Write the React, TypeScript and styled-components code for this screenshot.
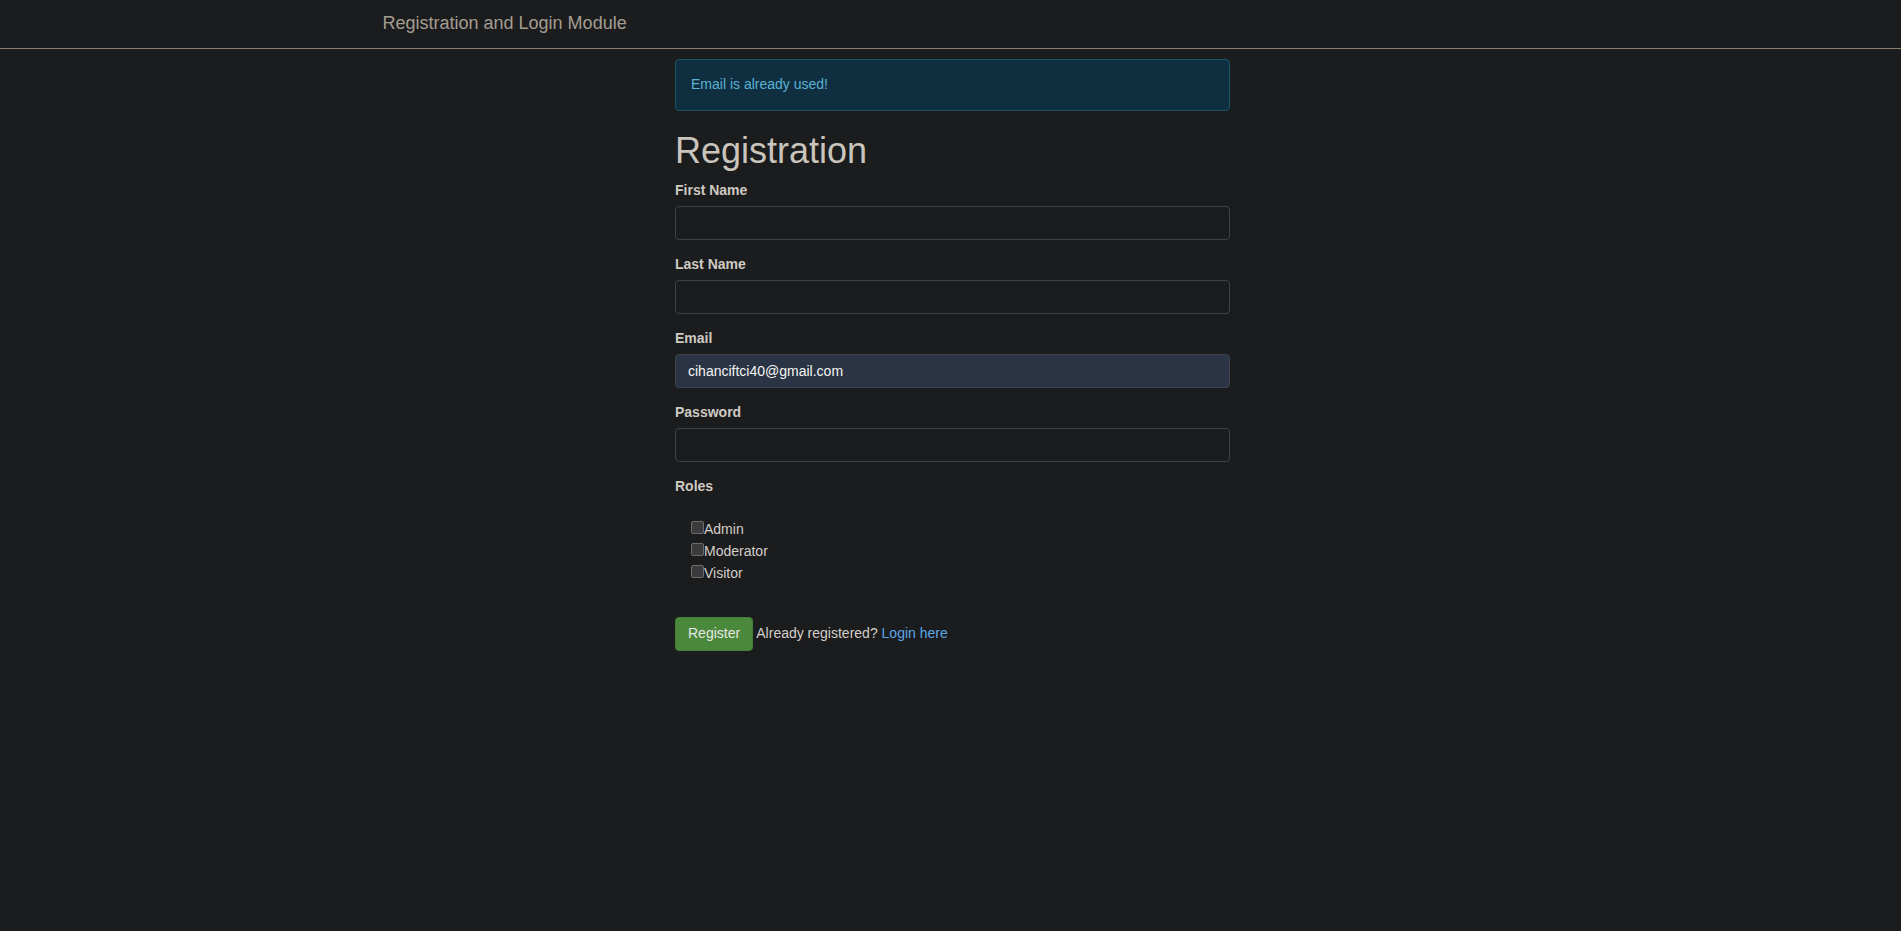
import styled, { createGlobalStyle } from "styled-components";

const GlobalStyle = createGlobalStyle`
  * {
    box-sizing: border-box;
  }

  body {
    margin: 0;
    background-color: #1b1c1e;
    color: #d3cec7;
    font-family: "Liberation Sans", Arial, Helvetica, sans-serif;
    font-size: 14px;
    line-height: 1.42857;
  }
`;

const Navbar = styled.nav`
  height: 49px;
  border-bottom: 1px solid #8c7f6a;
`;

const NavContainer = styled.div`
  width: 1170px;
  margin-left: calc(50% - 583px);
  padding: 0 15px;
`;

const Brand = styled.a`
  display: inline-block;
  padding-top: 13px;
  font-size: 18px;
  line-height: 20px;
  color: #a59c90;
  text-decoration: none;
`;

const Column = styled.main`
  width: 555px;
  margin-left: calc(50% - 275.5px);
  padding-top: 10px;
`;

const Alert = styled.div`
  padding: 15px;
  margin-bottom: 20px;
  border: 1px solid #1d5466;
  border-radius: 4px;
  background-color: #0f2f41;
  color: #5bb1d4;
`;

const Title = styled.h1`
  margin: 19px 0 10px;
  font-size: 36px;
  font-weight: 500;
  line-height: 1.1;
  color: #c9c4bc;
`;

const FormGroup = styled.div`
  margin-bottom: 15px;
`;

const Label = styled.label`
  display: block;
  margin-bottom: 5px;
  font-weight: 700;
  color: #cfcac2;
`;

const Input = styled.input<{ $filled?: boolean }>`
  display: block;
  width: 100%;
  height: 34px;
  padding: 6px 12px;
  font-family: inherit;
  font-size: 14px;
  line-height: 1.42857;
  color: #f4f4f4;
  background-color: ${(p) => (p.$filled ? "#2a3444" : "#1b1c1e")};
  border: 1px solid ${(p) => (p.$filled ? "#3a434f" : "#3e4346")};
  border-radius: 4px;
  outline: none;
`;

const RoleList = styled.div`
  margin-top: 20px;
  padding-left: 16px;
`;

const RoleRow = styled.div`
  line-height: 20px;
`;

const Checkbox = styled.input`
  width: 13px;
  height: 13px;
  margin: 4px 0 0;
  appearance: none;
  vertical-align: baseline;
  background-color: #3a3b3d;
  border: 1px solid #6c6c6c;
  border-radius: 2px;
`;

const Actions = styled.div`
  margin-top: 34px;
`;

const Button = styled.button`
  display: inline-block;
  height: 34px;
  padding: 6px 12px;
  font-family: inherit;
  font-size: 14px;
  line-height: 1.42857;
  color: #e8e6e3;
  background-color: #4a893c;
  border: 1px solid #437f37;
  border-radius: 4px;
  vertical-align: middle;
  cursor: pointer;
`;

const Hint = styled.span`
  color: #d3cec7;
`;

const LoginLink = styled.a`
  color: #5ba5e6;
  text-decoration: none;
`;

const roles = ["Admin", "Moderator", "Visitor"];

const App = () => {
  return (
    <>
      <GlobalStyle />
      <Navbar>
        <NavContainer>
          <Brand href="#">Registration and Login Module</Brand>
        </NavContainer>
      </Navbar>
      <Column>
        <Alert>Email is already used!</Alert>
        <Title>Registration</Title>
        <form onSubmit={(e) => e.preventDefault()}>
          <FormGroup>
            <Label>First Name</Label>
            <Input type="text" />
          </FormGroup>
          <FormGroup>
            <Label>Last Name</Label>
            <Input type="text" />
          </FormGroup>
          <FormGroup>
            <Label>Email</Label>
            <Input type="text" $filled defaultValue="cihanciftci40@gmail.com" />
          </FormGroup>
          <FormGroup>
            <Label>Password</Label>
            <Input type="password" />
          </FormGroup>
          <Label>Roles</Label>
          <RoleList>
            {roles.map((role) => (
              <RoleRow key={role}>
                <Checkbox type="checkbox" />
                {role}
              </RoleRow>
            ))}
          </RoleList>
          <Actions>
            <Button type="submit">Register</Button>{" "}
            <Hint>Already registered?</Hint>{" "}
            <LoginLink href="#">Login here</LoginLink>
          </Actions>
        </form>
      </Column>
    </>
  );
};

export default App;
